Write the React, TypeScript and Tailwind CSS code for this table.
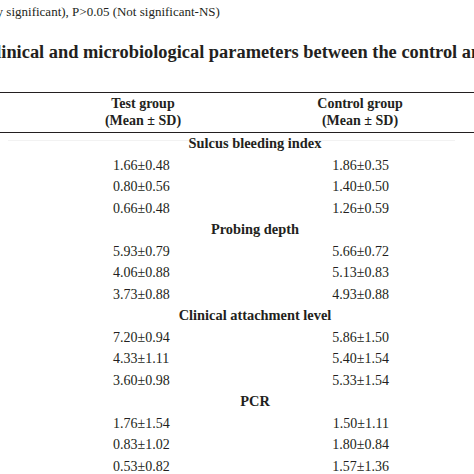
const serif = { fontFamily: '"Liberation Serif", "Times New Roman", serif' }

type Section = {
  title: string
  rows: [string, string][]
}

const sections: Section[] = [
  {
    title: "Sulcus bleeding index",
    rows: [
      ["1.66±0.48", "1.86±0.35"],
      ["0.80±0.56", "1.40±0.50"],
      ["0.66±0.48", "1.26±0.59"],
    ],
  },
  {
    title: "Probing depth",
    rows: [
      ["5.93±0.79", "5.66±0.72"],
      ["4.06±0.88", "5.13±0.83"],
      ["3.73±0.88", "4.93±0.88"],
    ],
  },
  {
    title: "Clinical attachment level",
    rows: [
      ["7.20±0.94", "5.86±1.50"],
      ["4.33±1.11", "5.40±1.54"],
      ["3.60±0.98", "5.33±1.54"],
    ],
  },
  {
    title: "PCR",
    rows: [
      ["1.76±1.54", "1.50±1.11"],
      ["0.83±1.02", "1.80±0.84"],
      ["0.53±0.82", "1.57±1.36"],
    ],
  },
]

export default function App() {
  return (
    <div className="w-[474px] h-[474px] overflow-hidden bg-white text-[#231f20]" style={serif}>
      {/* footnote line, cut on the left */}
      <div className="h-[24px] flex items-center whitespace-nowrap text-[13px]">
        <span className="-ml-[7px]">ly significant), P&gt;0.05 (Not significant-NS)</span>
      </div>

      {/* caption, runs off both sides */}
      <div className="h-[68px] pt-[17px] leading-[22px] whitespace-nowrap text-[18.4px] font-bold">
        <span className="-ml-[12px]">clinical and microbiological parameters between the control and test groups</span>
      </div>

      <div className="border-t border-[#231f20] w-[474px]" />

      <div className="flex text-[14px] font-bold leading-[17px] pt-[2px] pb-[3px]">
        <div className="w-[286px] text-center">
          <div>Test group</div>
          <div>(Mean ± SD)</div>
        </div>
        <div className="w-[148px] text-center">
          <div>Control group</div>
          <div>(Mean ± SD)</div>
        </div>
      </div>

      <div className="border-t border-[#231f20] w-[474px]" />
      <div className="mt-[7px] ml-[8px] w-[447px] border-t border-[#f2f2f2]" />

      <div className="-mt-[8px] text-[14px]">
        {sections.map((section) => (
          <div key={section.title}>
            <div className="w-[510px] h-[21.5px] flex items-center justify-center font-bold text-[14.4px] whitespace-nowrap">
              {section.title}
            </div>
            {section.rows.map(([test, control]) => (
              <div key={test + control} className="w-[389px] h-[21.5px] pl-[113px] flex items-center justify-between">
                <span>{test}</span>
                <span>{control}</span>
              </div>
            ))}
          </div>
        ))}
      </div>
    </div>
  )
}
